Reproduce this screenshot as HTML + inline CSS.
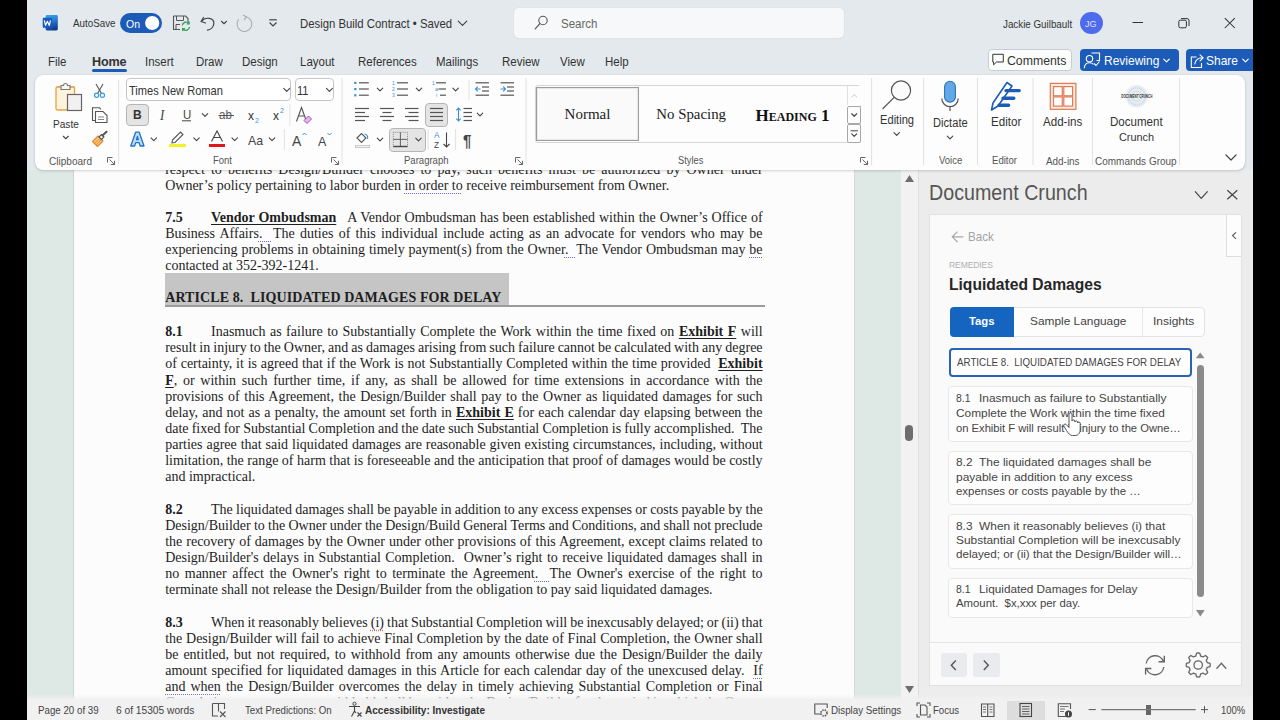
<!DOCTYPE html><html><head><meta charset="utf-8"><style>
html,body{margin:0;padding:0;width:1280px;height:720px;overflow:hidden;background:#e3e9ec;}
.a{position:absolute;}
.t{position:absolute;white-space:pre;line-height:1;}
svg{overflow:visible;}
.ln{position:absolute;white-space:nowrap;line-height:1;font-family:'Liberation Serif',serif;font-size:14px;color:#1e1e1e;text-align:justify;text-align-last:justify;}
.ln.last{text-align:left;text-align-last:left;}
.bu{font-weight:bold;text-decoration:underline;text-underline-offset:2px;text-decoration-thickness:1px;}
.sq{text-decoration:underline dotted #6b6bd6;text-underline-offset:3px;text-decoration-thickness:1px;}
</style></head><body>
<div class="a" style="left:27.00px;top:170.00px;width:874.00px;height:529.00px;background:#dee8e5;"></div>
<div class="a" style="left:73.00px;top:170.00px;width:781.50px;height:529.00px;background:#fcfcfc;border-left:1px solid #cfd5d4;border-right:1px solid #d5dbda;box-sizing:border-box;"></div>
<div class="a" style="left:901.00px;top:170.00px;width:16.50px;height:529.00px;background:#f2f2f2;"></div>
<div class="a" style="left:917.50px;top:170.00px;width:1.00px;height:529.00px;background:#dedede;"></div>
<div class="a" style="left:918.50px;top:170.00px;width:334.50px;height:529.00px;background:#ececec;"></div>
<div class="ln" style="left:165.20px;top:162.88px;width:597.40px;">respect to benefits Design/Builder chooses to pay, such benefits must be authorized by Owner under</div>
<div class="ln last" style="left:165.20px;top:178.98px;width:597.40px;">Owner’s policy pertaining to labor burden <span class="sq">in order to</span> receive reimbursement from Owner.</div>
<div class="ln last" style="left:165.20px;top:210.58px;font-weight:bold;">7.5</div>
<div class="ln" style="left:211.00px;top:210.58px;width:551.60px;"><span class="bu">Vendor Ombudsman</span>&nbsp;&nbsp; A Vendor Ombudsman has been established within the Owner’s Office of</div>
<div class="ln" style="left:165.20px;top:226.70px;width:597.40px;">Business Affairs<span class="sq">.&nbsp;&nbsp;</span>The duties of this individual include acting as an advocate for vendors who may be</div>
<div class="ln" style="left:165.20px;top:242.82px;width:597.40px;">experiencing problems in obtaining timely payment(s) from the Owner<span class="sq">.&nbsp;&nbsp;</span>The Vendor Ombudsman may <span class="sq">be</span></div>
<div class="ln last" style="left:165.20px;top:258.94px;width:597.40px;"><span class="sq">contacted</span> at 352-392-1241.</div>
<div class="a" style="left:165.00px;top:273.30px;width:344.00px;height:32.30px;background:#c5c5c5;"></div>
<div class="ln last" style="left:165.20px;top:290.78px;font-weight:bold;letter-spacing:0.085px;">ARTICLE 8<span class="sq">.&nbsp;&nbsp;</span>LIQUIDATED DAMAGES FOR DELAY</div>
<div class="a" style="left:165.00px;top:305.00px;width:599.60px;height:2.00px;background:#9c9c9c;"></div>
<div class="ln last" style="left:165.20px;top:325.08px;font-weight:bold;">8.1</div>
<div class="ln" style="left:211.00px;top:325.08px;width:551.60px;">Inasmuch as failure to Substantially Complete the Work within the time fixed on <span class="bu">Exhibit F</span> will</div>
<div class="ln" style="left:165.20px;top:341.22px;width:597.40px;word-spacing:-0.468px;">result in injury to the Owner, and as damages arising from such failure cannot be calculated with any degree</div>
<div class="ln" style="left:165.20px;top:357.36px;width:597.40px;">of certainty, it is agreed that if the Work is not Substantially Completed within the time provided &nbsp;<span class="bu">Exhibit</span></div>
<div class="ln" style="left:165.20px;top:373.50px;width:597.40px;"><span class="bu">F</span>, or within such further time, if any, as shall be allowed for time extensions in accordance with the</div>
<div class="ln" style="left:165.20px;top:389.64px;width:597.40px;">provisions of this Agreement, the Design/Builder shall pay to the Owner as liquidated damages for such</div>
<div class="ln" style="left:165.20px;top:405.78px;width:597.40px;">delay, and not as a penalty, the amount set forth in <span class="bu">Exhibit E</span> for each calendar day elapsing between the</div>
<div class="ln" style="left:165.20px;top:421.92px;width:597.40px;word-spacing:-0.319px;">date fixed for Substantial Completion and the date such Substantial Completion is fully accomplished. &nbsp;The</div>
<div class="ln" style="left:165.20px;top:438.06px;width:597.40px;">parties agree that said liquidated damages are reasonable given existing circumstances, including, without</div>
<div class="ln" style="left:165.20px;top:454.20px;width:597.40px;">limitation, the range of harm that is foreseeable and the anticipation that proof of damages would be costly</div>
<div class="ln last" style="left:165.20px;top:470.34px;width:597.40px;">and impractical.</div>
<div class="ln last" style="left:165.20px;top:502.58px;font-weight:bold;">8.2</div>
<div class="ln" style="left:211.00px;top:502.58px;width:551.60px;word-spacing:-0.242px;">The liquidated damages shall be payable in addition to any excess expenses or costs payable by the</div>
<div class="ln" style="left:165.20px;top:518.74px;width:597.40px;word-spacing:-0.281px;">Design/Builder to the Owner under the Design/Build General Terms and Conditions, and shall not preclude</div>
<div class="ln" style="left:165.20px;top:534.90px;width:597.40px;">the recovery of damages by the Owner under other provisions of this Agreement, except claims related to</div>
<div class="ln" style="left:165.20px;top:551.06px;width:597.40px;">Design/Builder's delays in Substantial Completion. &nbsp;Owner’s right to receive liquidated damages shall in</div>
<div class="ln" style="left:165.20px;top:567.22px;width:597.40px;">no manner affect the Owner's right to terminate the Agreement<span class="sq">.&nbsp;&nbsp;</span>The Owner's exercise of the right to</div>
<div class="ln last" style="left:165.20px;top:583.38px;width:597.40px;">terminate shall not release the Design/Builder from the obligation to pay said liquidated damages.</div>
<div class="ln last" style="left:165.20px;top:615.58px;font-weight:bold;">8.3</div>
<div class="ln" style="left:211.00px;top:615.58px;width:551.60px;word-spacing:-0.501px;">When it reasonably believes <span style="text-decoration:underline dotted #d07070;text-underline-offset:3px">(i)</span> that Substantial Completion will be inexcusably delayed; or (ii) that</div>
<div class="ln" style="left:165.20px;top:631.68px;width:597.40px;">the Design/Builder will fail to achieve Final Completion by the date of Final Completion, the Owner shall</div>
<div class="ln" style="left:165.20px;top:647.78px;width:597.40px;">be entitled, but not required, to withhold from any amounts otherwise due the Design/Builder the daily</div>
<div class="ln" style="left:165.20px;top:663.88px;width:597.40px;">amount specified for liquidated damages in this Article for each calendar day of the unexcused delay. &nbsp;<span class="sq">If</span></div>
<div class="ln" style="left:165.20px;top:679.98px;width:597.40px;"><span class="sq">and when</span> the Design/Builder overcomes the delay in timely achieving Substantial Completion or Final</div>
<div class="ln" style="left:165.20px;top:696.08px;width:597.40px;word-spacing:-0.466px;">Completion, any amounts so withheld shall be paid to the Design/Builder for the period in which the Owner</div>
<div class="a" style="left:905.40px;top:424.60px;width:7.60px;height:16.20px;background:#6e6e6e;border-radius:4px;"></div>
<div class="a" style="left:27.00px;top:0.00px;width:1226.00px;height:170.00px;background:#e3e9ec;"></div>
<div class="t" style="left:72.70px;top:17.96px;font-size:10.58px;color:#333;font-weight:normal;font-family:'Liberation Sans', sans-serif;transform:scaleX(0.9259);transform-origin:0 0;">AutoSave</div>
<div class="a" style="left:120.40px;top:13.40px;width:41.60px;height:19.20px;background:#1d5bb8;border-radius:10px;"></div>
<div class="t" style="left:125.80px;top:18.57px;font-size:11.34px;color:#fff;font-weight:normal;font-family:'Liberation Sans', sans-serif;transform:scaleX(0.9259);transform-origin:0 0;">On</div>
<div class="t" style="left:300.30px;top:18.31px;font-size:12.26px;color:#333;font-weight:normal;font-family:'Liberation Sans', sans-serif;transform:scaleX(0.9259);transform-origin:0 0;">Design Build Contract • Saved</div>
<div class="a" style="left:513.50px;top:8.00px;width:330.20px;height:30.00px;background:#f6f8f9;border-radius:5px;box-shadow:0 0 0 1px #dfe4e7, 0 1px 1px #d2d7da;"></div>
<div class="t" style="left:561.00px;top:18.23px;font-size:12.42px;color:#666;font-weight:normal;font-family:'Liberation Sans', sans-serif;transform:scaleX(0.9259);transform-origin:0 0;">Search</div>
<div class="t" style="left:1002.50px;top:18.56px;font-size:10.58px;color:#333;font-weight:normal;font-family:'Liberation Sans', sans-serif;transform:scaleX(0.9259);transform-origin:0 0;">Jackie Guilbault</div>
<div class="a" style="left:1080.30px;top:11.50px;width:22.80px;height:22.80px;background:#4f6bed;border-radius:50%;"></div>
<div class="t" style="left:1084.60px;top:18.99px;font-size:9.72px;color:#dfe5ff;font-weight:normal;font-family:'Liberation Sans', sans-serif;transform:scaleX(0.9259);transform-origin:0 0;">JG</div>
<div class="t" style="left:47.90px;top:55.83px;font-size:12.42px;color:#333;font-weight:normal;font-family:'Liberation Sans', sans-serif;transform:scaleX(0.9259);transform-origin:0 0;">File</div>
<div class="t" style="left:91.50px;top:55.23px;font-size:13.61px;color:#333;font-weight:bold;font-family:'Liberation Sans', sans-serif;transform:scaleX(0.9259);transform-origin:0 0;letter-spacing:-0.15px;">Home</div>
<div class="t" style="left:145.40px;top:55.83px;font-size:12.42px;color:#333;font-weight:normal;font-family:'Liberation Sans', sans-serif;transform:scaleX(0.9259);transform-origin:0 0;">Insert</div>
<div class="t" style="left:195.50px;top:55.83px;font-size:12.42px;color:#333;font-weight:normal;font-family:'Liberation Sans', sans-serif;transform:scaleX(0.9259);transform-origin:0 0;">Draw</div>
<div class="t" style="left:242.30px;top:55.83px;font-size:12.42px;color:#333;font-weight:normal;font-family:'Liberation Sans', sans-serif;transform:scaleX(0.9259);transform-origin:0 0;">Design</div>
<div class="t" style="left:300.00px;top:55.83px;font-size:12.42px;color:#333;font-weight:normal;font-family:'Liberation Sans', sans-serif;transform:scaleX(0.9259);transform-origin:0 0;">Layout</div>
<div class="t" style="left:357.80px;top:55.83px;font-size:12.42px;color:#333;font-weight:normal;font-family:'Liberation Sans', sans-serif;transform:scaleX(0.9259);transform-origin:0 0;">References</div>
<div class="t" style="left:436.40px;top:55.83px;font-size:12.42px;color:#333;font-weight:normal;font-family:'Liberation Sans', sans-serif;transform:scaleX(0.9259);transform-origin:0 0;">Mailings</div>
<div class="t" style="left:502.20px;top:55.83px;font-size:12.42px;color:#333;font-weight:normal;font-family:'Liberation Sans', sans-serif;transform:scaleX(0.9259);transform-origin:0 0;">Review</div>
<div class="t" style="left:559.60px;top:55.83px;font-size:12.42px;color:#333;font-weight:normal;font-family:'Liberation Sans', sans-serif;transform:scaleX(0.9259);transform-origin:0 0;">View</div>
<div class="t" style="left:604.90px;top:55.83px;font-size:12.42px;color:#333;font-weight:normal;font-family:'Liberation Sans', sans-serif;transform:scaleX(0.9259);transform-origin:0 0;">Help</div>
<div class="a" style="left:91.50px;top:69.00px;width:35.00px;height:2.60px;background:#1d5bb8;border-radius:2px;"></div>
<div class="a" style="left:987.70px;top:48.60px;width:84.80px;height:22.90px;background:#fbfcfc;border:1px solid #c9cdd0;border-radius:4px;box-sizing:border-box;"></div>
<div class="t" style="left:1007.30px;top:54.19px;font-size:13.28px;color:#333;font-weight:normal;font-family:'Liberation Sans', sans-serif;transform:scaleX(0.9259);transform-origin:0 0;">Comments</div>
<div class="a" style="left:1080.20px;top:48.60px;width:98.40px;height:22.90px;background:#1d5bb8;border-radius:4px;"></div>
<div class="t" style="left:1103.60px;top:54.56px;font-size:12.96px;color:#fff;font-weight:normal;font-family:'Liberation Sans', sans-serif;transform:scaleX(0.9259);transform-origin:0 0;">Reviewing</div>
<div class="a" style="left:1186.00px;top:48.60px;width:70.00px;height:22.90px;background:#1d5bb8;border-radius:4px;"></div>
<div class="t" style="left:1206.40px;top:54.56px;font-size:12.96px;color:#fff;font-weight:normal;font-family:'Liberation Sans', sans-serif;transform:scaleX(0.9259);transform-origin:0 0;">Share</div>
<div class="a" style="left:35.00px;top:75.00px;width:1209.50px;height:95.00px;background:#fdfdfd;border-radius:8px;box-shadow:0 1px 3px rgba(0,0,0,0.16), 0 0 1px rgba(0,0,0,0.12);"></div>
<div class="t" style="left:49.00px;top:155.62px;font-size:10.85px;color:#555;font-weight:normal;font-family:'Liberation Sans', sans-serif;transform:scaleX(0.9259);transform-origin:0 0;">Clipboard</div>
<div class="t" style="left:213.10px;top:155.92px;font-size:10.26px;color:#555;font-weight:normal;font-family:'Liberation Sans', sans-serif;transform:scaleX(0.9259);transform-origin:0 0;">Font</div>
<div class="t" style="left:404.00px;top:155.89px;font-size:10.31px;color:#555;font-weight:normal;font-family:'Liberation Sans', sans-serif;transform:scaleX(0.9259);transform-origin:0 0;">Paragraph</div>
<div class="t" style="left:678.00px;top:156.03px;font-size:10.04px;color:#555;font-weight:normal;font-family:'Liberation Sans', sans-serif;transform:scaleX(0.9259);transform-origin:0 0;">Styles</div>
<div class="t" style="left:938.75px;top:156.12px;font-size:10.26px;color:#555;font-weight:normal;font-family:'Liberation Sans', sans-serif;transform:scaleX(0.9259);transform-origin:0 0;">Voice</div>
<div class="t" style="left:992.30px;top:156.06px;font-size:10.37px;color:#555;font-weight:normal;font-family:'Liberation Sans', sans-serif;transform:scaleX(0.9259);transform-origin:0 0;">Editor</div>
<div class="t" style="left:1045.70px;top:155.90px;font-size:10.69px;color:#555;font-weight:normal;font-family:'Liberation Sans', sans-serif;transform:scaleX(0.9259);transform-origin:0 0;">Add-ins</div>
<div class="t" style="left:1095.00px;top:155.85px;font-size:10.80px;color:#555;font-weight:normal;font-family:'Liberation Sans', sans-serif;transform:scaleX(0.9259);transform-origin:0 0;">Commands Group</div>
<div class="t" style="left:53.40px;top:118.79px;font-size:10.91px;color:#333;font-weight:normal;font-family:'Liberation Sans', sans-serif;transform:scaleX(0.9259);transform-origin:0 0;">Paste</div>
<div class="a" style="left:126.40px;top:78.40px;width:165.00px;height:22.40px;background:#fff;border:1px solid #c6c6c6;border-radius:4px;box-sizing:border-box;"></div>
<div class="t" style="left:128.60px;top:85.25px;font-size:11.99px;color:#333;font-weight:normal;font-family:'Liberation Sans', sans-serif;transform:scaleX(0.9259);transform-origin:0 0;">Times New Roman</div>
<div class="a" style="left:294.50px;top:78.40px;width:39.90px;height:22.40px;background:#fff;border:1px solid #c6c6c6;border-radius:4px;box-sizing:border-box;"></div>
<div class="t" style="left:297.00px;top:85.25px;font-size:11.99px;color:#333;font-weight:normal;font-family:'Liberation Sans', sans-serif;transform:scaleX(0.9259);transform-origin:0 0;">11</div>
<div class="a" style="left:126.40px;top:104.00px;width:22.60px;height:22.20px;background:#e4e4e4;border:1px solid #b5b5b5;border-radius:4px;box-sizing:border-box;"></div>
<div class="t" style="left:133.30px;top:108.86px;font-size:12.96px;color:#333;font-weight:bold;font-family:'Liberation Sans', sans-serif;transform:scaleX(0.9259);transform-origin:0 0;">B</div>
<div class="t" style="left:159.50px;top:108.31px;font-size:14.04px;color:#444;font-weight:normal;font-family:'Liberation Sans', sans-serif;transform:scaleX(0.9259);transform-origin:0 0;font-style:italic;font-family:'Liberation Serif',serif;">I</div>
<div class="t" style="left:182.50px;top:108.63px;font-size:12.42px;color:#444;font-weight:normal;font-family:'Liberation Sans', sans-serif;transform:scaleX(0.9259);transform-origin:0 0;">U</div>
<div class="t" style="left:219.00px;top:109.43px;font-size:12.42px;color:#555;font-weight:normal;font-family:'Liberation Sans', sans-serif;transform:scaleX(0.9259);transform-origin:0 0;">ab</div>
<div class="t" style="left:247.70px;top:109.86px;font-size:12.96px;color:#333;font-weight:normal;font-family:'Liberation Sans', sans-serif;transform:scaleX(0.9259);transform-origin:0 0;">x</div>
<div class="t" style="left:254.50px;top:117.08px;font-size:7.56px;color:#3b8fd9;font-weight:normal;font-family:'Liberation Sans', sans-serif;transform:scaleX(0.9259);transform-origin:0 0;">2</div>
<div class="t" style="left:272.70px;top:109.86px;font-size:12.96px;color:#333;font-weight:normal;font-family:'Liberation Sans', sans-serif;transform:scaleX(0.9259);transform-origin:0 0;">x</div>
<div class="t" style="left:279.50px;top:107.08px;font-size:7.56px;color:#3b8fd9;font-weight:normal;font-family:'Liberation Sans', sans-serif;transform:scaleX(0.9259);transform-origin:0 0;">2</div>
<div class="a" style="left:169.00px;top:143.60px;width:17.00px;height:3.50px;background:#f2f22a;"></div>
<div class="a" style="left:209.00px;top:143.80px;width:15.70px;height:3.40px;background:#e0161b;"></div>
<div class="t" style="left:248.40px;top:133.69px;font-size:13.28px;color:#444;font-weight:normal;font-family:'Liberation Sans', sans-serif;transform:scaleX(0.9259);transform-origin:0 0;">Aa</div>
<div class="t" style="left:292.00px;top:133.26px;font-size:15.12px;color:#444;font-weight:normal;font-family:'Liberation Sans', sans-serif;transform:scaleX(0.9259);transform-origin:0 0;">A</div>
<div class="t" style="left:318.00px;top:134.58px;font-size:13.50px;color:#444;font-weight:normal;font-family:'Liberation Sans', sans-serif;transform:scaleX(0.9259);transform-origin:0 0;">A</div>
<div class="t" style="left:392.20px;top:80.97px;font-size:5.40px;color:#3b8fd9;font-weight:normal;font-family:'Liberation Sans', sans-serif;transform:scaleX(0.9259);transform-origin:0 0;">1</div>
<div class="t" style="left:392.20px;top:87.17px;font-size:5.40px;color:#3b8fd9;font-weight:normal;font-family:'Liberation Sans', sans-serif;transform:scaleX(0.9259);transform-origin:0 0;">2</div>
<div class="t" style="left:392.20px;top:93.37px;font-size:5.40px;color:#3b8fd9;font-weight:normal;font-family:'Liberation Sans', sans-serif;transform:scaleX(0.9259);transform-origin:0 0;">3</div>
<div class="t" style="left:432.00px;top:80.77px;font-size:5.40px;color:#3b8fd9;font-weight:normal;font-family:'Liberation Sans', sans-serif;transform:scaleX(0.9259);transform-origin:0 0;">1</div>
<div class="t" style="left:434.50px;top:86.90px;font-size:5.94px;color:#3b8fd9;font-weight:normal;font-family:'Liberation Sans', sans-serif;transform:scaleX(0.9259);transform-origin:0 0;">a</div>
<div class="t" style="left:436.00px;top:93.37px;font-size:5.40px;color:#3b8fd9;font-weight:normal;font-family:'Liberation Sans', sans-serif;transform:scaleX(0.9259);transform-origin:0 0;">i</div>
<div class="a" style="left:425.00px;top:103.20px;width:23.00px;height:23.40px;background:#e4e4e4;border:1px solid #b5b5b5;border-radius:4px;box-sizing:border-box;"></div>
<div class="a" style="left:354.50px;top:144.50px;width:15.00px;height:3.00px;background:#f4f4f4;border:1px solid #c9c9c9;box-sizing:border-box;"></div>
<div class="a" style="left:389.00px;top:128.20px;width:37.00px;height:23.40px;background:#e4e4e4;border:1px solid #b5b5b5;border-radius:4px;box-sizing:border-box;"></div>
<div class="t" style="left:434.00px;top:130.73px;font-size:8.86px;color:#3b8fd9;font-weight:normal;font-family:'Liberation Sans', sans-serif;transform:scaleX(0.9259);transform-origin:0 0;">A</div>
<div class="t" style="left:434.00px;top:140.73px;font-size:8.86px;color:#444;font-weight:normal;font-family:'Liberation Sans', sans-serif;transform:scaleX(0.9259);transform-origin:0 0;">Z</div>
<div class="t" style="left:463.30px;top:132.52px;font-size:16.20px;color:#444;font-weight:bold;font-family:'Liberation Sans', sans-serif;transform:scaleX(0.9259);transform-origin:0 0;">¶</div>
<div class="a" style="left:535.40px;top:85.40px;width:325.90px;height:58.00px;background:#fdfdfd;border:1px solid #d6d6d6;border-radius:3px;box-sizing:border-box;"></div>
<div class="a" style="left:536.20px;top:86.60px;width:103.10px;height:54.00px;background:#fafafa;border:1px solid #9d9d9d;box-shadow:inset 0 0 0 1px #e8e8e8;box-sizing:border-box;"></div>
<div class="t" style="left:564.60px;top:107.10px;font-size:15.00px;color:#222;font-weight:normal;font-family:'Liberation Serif', serif;">Normal</div>
<div class="t" style="left:656.30px;top:107.17px;font-size:14.85px;color:#222;font-weight:normal;font-family:'Liberation Serif', serif;">No Spacing</div>
<div class="t" style="left:755.50px;top:106.50px;font-size:17.00px;color:#111;font-weight:bold;font-family:'Liberation Serif', serif;font-variant:small-caps;">Heading 1</div>
<div class="a" style="left:847.00px;top:86.00px;width:14.30px;height:19.00px;background:#fdfdfd;border-left:1px solid #e0e0e0;box-sizing:border-box;"></div>
<div class="a" style="left:847.00px;top:105.80px;width:14.30px;height:18.20px;background:#fdfdfd;border:1px solid #a8a8a8;border-radius:2px;box-sizing:border-box;"></div>
<div class="a" style="left:847.00px;top:124.00px;width:14.30px;height:19.40px;background:#fdfdfd;border:1px solid #a8a8a8;border-radius:2px;box-sizing:border-box;"></div>
<div class="t" style="left:880.20px;top:114.32px;font-size:12.04px;color:#333;font-weight:normal;font-family:'Liberation Sans', sans-serif;transform:scaleX(0.9259);transform-origin:0 0;">Editing</div>
<div class="t" style="left:933.40px;top:116.72px;font-size:12.04px;color:#333;font-weight:normal;font-family:'Liberation Sans', sans-serif;transform:scaleX(0.9259);transform-origin:0 0;">Dictate</div>
<div class="t" style="left:990.80px;top:115.77px;font-size:12.53px;color:#333;font-weight:normal;font-family:'Liberation Sans', sans-serif;transform:scaleX(0.9259);transform-origin:0 0;">Editor</div>
<div class="t" style="left:1043.00px;top:115.57px;font-size:12.53px;color:#333;font-weight:normal;font-family:'Liberation Sans', sans-serif;transform:scaleX(0.9259);transform-origin:0 0;">Add-ins</div>
<div class="t" style="left:1110.00px;top:115.80px;font-size:12.48px;color:#333;font-weight:normal;font-family:'Liberation Sans', sans-serif;transform:scaleX(0.9259);transform-origin:0 0;">Document</div>
<div class="t" style="left:1118.75px;top:131.16px;font-size:11.77px;color:#333;font-weight:normal;font-family:'Liberation Sans', sans-serif;transform:scaleX(0.9259);transform-origin:0 0;">Crunch</div>
<div class="t" style="left:929.00px;top:182.74px;font-size:21.50px;color:#555;font-weight:normal;font-family:'Liberation Sans', sans-serif;transform:scaleX(0.9153);transform-origin:0 0;">Document Crunch</div>
<div class="a" style="left:928.60px;top:213.50px;width:313.10px;height:472.90px;background:#fafafa;border:1px solid #e2e2e2;box-sizing:border-box;"></div>
<div class="a" style="left:1226.00px;top:213.50px;width:15.70px;height:43.50px;background:#fdfdfd;border-left:1px solid #dedede;border-bottom:1px solid #dedede;border-top:1px solid #e2e2e2;border-right:1px solid #e2e2e2;box-sizing:border-box;"></div>
<div class="t" style="left:967.70px;top:231.17px;font-size:12.53px;color:#a3a3a3;font-weight:normal;font-family:'Liberation Sans', sans-serif;transform:scaleX(0.9259);transform-origin:0 0;">Back</div>
<div class="t" style="left:948.60px;top:261.01px;font-size:9.29px;color:#b0b0b0;font-weight:normal;font-family:'Liberation Sans', sans-serif;transform:scaleX(0.9259);transform-origin:0 0;letter-spacing:-0.15px;">REMEDIES</div>
<div class="t" style="left:948.60px;top:277.22px;font-size:15.80px;color:#262626;font-weight:bold;font-family:'Liberation Sans', sans-serif;transform:scaleX(0.9882);transform-origin:0 0;">Liquidated Damages</div>
<div class="a" style="left:949.70px;top:307.30px;width:255.50px;height:30.20px;background:#fdfdfd;border:1px solid #e3e3e3;border-radius:4px;box-sizing:border-box;"></div>
<div class="a" style="left:949.70px;top:307.30px;width:64.10px;height:30.20px;background:#1565c0;border-radius:4px 0 0 4px;"></div>
<div class="a" style="left:1141.70px;top:308.00px;width:1.00px;height:29.00px;background:#e6e6e6;"></div>
<div class="t" style="left:969.00px;top:315.44px;font-size:11.60px;color:#fff;font-weight:bold;font-family:'Liberation Sans', sans-serif;transform:scaleX(0.9728);transform-origin:0 0;">Tags</div>
<div class="t" style="left:1029.50px;top:315.44px;font-size:11.60px;color:#444;font-weight:normal;font-family:'Liberation Sans', sans-serif;transform:scaleX(1.0248);transform-origin:0 0;">Sample Language</div>
<div class="t" style="left:1153.00px;top:315.44px;font-size:11.60px;color:#444;font-weight:normal;font-family:'Liberation Sans', sans-serif;transform:scaleX(1.0331);transform-origin:0 0;">Insights</div>
<div class="a" style="left:948.60px;top:348.40px;width:243.40px;height:29.10px;background:#fff;border:2px solid #2a62b8;border-radius:4px;box-sizing:border-box;"></div>
<div class="t" style="left:957.30px;top:357.35px;font-size:10.60px;color:#444;font-weight:normal;font-family:'Liberation Sans', sans-serif;transform:scaleX(0.9220);transform-origin:0 0;">ARTICLE 8.&nbsp;&nbsp;LIQUIDATED DAMAGES FOR DELAY</div>
<div class="a" style="left:1196.50px;top:364.80px;width:7.50px;height:232.10px;background:#8a8a8a;border-radius:4px;"></div>
<div class="a" style="left:948.30px;top:386.40px;width:244.40px;height:55.30px;background:#fdfdfd;border:1px solid #e8e8e8;border-radius:4px;box-sizing:border-box;"></div>
<div class="t" style="left:956.40px;top:393.34px;font-size:11.20px;color:#444;font-weight:normal;font-family:'Liberation Sans', sans-serif;transform:scaleX(0.9313);transform-origin:0 0;">8.1</div>
<div class="t" style="left:979.40px;top:393.34px;font-size:11.20px;color:#444;font-weight:normal;font-family:'Liberation Sans', sans-serif;transform:scaleX(1.0648);transform-origin:0 0;">Inasmuch as failure to Substantially</div>
<div class="t" style="left:956.40px;top:408.34px;font-size:11.20px;color:#444;font-weight:normal;font-family:'Liberation Sans', sans-serif;transform:scaleX(1.0608);transform-origin:0 0;">Complete the Work within the time fixed</div>
<div class="t" style="left:956.40px;top:422.54px;font-size:11.20px;color:#444;font-weight:normal;font-family:'Liberation Sans', sans-serif;transform:scaleX(1.0008);transform-origin:0 0;">on Exhibit F will result in injury to the Owne…</div>
<div class="a" style="left:948.30px;top:450.50px;width:244.40px;height:54.70px;background:#fdfdfd;border:1px solid #e8e8e8;border-radius:4px;box-sizing:border-box;"></div>
<div class="t" style="left:956.40px;top:457.34px;font-size:11.20px;color:#444;font-weight:normal;font-family:'Liberation Sans', sans-serif;transform:scaleX(1.0597);transform-origin:0 0;">8.2</div>
<div class="t" style="left:979.40px;top:457.34px;font-size:11.20px;color:#444;font-weight:normal;font-family:'Liberation Sans', sans-serif;transform:scaleX(1.0703);transform-origin:0 0;">The liquidated damages shall be</div>
<div class="t" style="left:956.40px;top:471.54px;font-size:11.20px;color:#444;font-weight:normal;font-family:'Liberation Sans', sans-serif;transform:scaleX(1.0703);transform-origin:0 0;">payable in addition to any excess</div>
<div class="t" style="left:956.40px;top:485.94px;font-size:11.20px;color:#444;font-weight:normal;font-family:'Liberation Sans', sans-serif;transform:scaleX(1.0241);transform-origin:0 0;">expenses or costs payable by the …</div>
<div class="a" style="left:948.30px;top:513.75px;width:244.40px;height:55.15px;background:#fdfdfd;border:1px solid #e8e8e8;border-radius:4px;box-sizing:border-box;"></div>
<div class="t" style="left:956.40px;top:520.54px;font-size:11.20px;color:#444;font-weight:normal;font-family:'Liberation Sans', sans-serif;transform:scaleX(1.0597);transform-origin:0 0;">8.3</div>
<div class="t" style="left:979.40px;top:520.54px;font-size:11.20px;color:#444;font-weight:normal;font-family:'Liberation Sans', sans-serif;transform:scaleX(1.0656);transform-origin:0 0;">When it reasonably believes (i) that</div>
<div class="t" style="left:956.40px;top:535.04px;font-size:11.20px;color:#444;font-weight:normal;font-family:'Liberation Sans', sans-serif;transform:scaleX(1.0642);transform-origin:0 0;">Substantial Completion will be inexcusably</div>
<div class="t" style="left:956.40px;top:549.24px;font-size:11.20px;color:#444;font-weight:normal;font-family:'Liberation Sans', sans-serif;transform:scaleX(1.0402);transform-origin:0 0;">delayed; or (ii) that the Design/Builder will…</div>
<div class="a" style="left:948.30px;top:577.60px;width:244.40px;height:40.70px;background:#fdfdfd;border:1px solid #e8e8e8;border-radius:4px;box-sizing:border-box;"></div>
<div class="t" style="left:956.40px;top:584.24px;font-size:11.20px;color:#444;font-weight:normal;font-family:'Liberation Sans', sans-serif;transform:scaleX(0.9313);transform-origin:0 0;">8.1</div>
<div class="t" style="left:979.40px;top:584.24px;font-size:11.20px;color:#444;font-weight:normal;font-family:'Liberation Sans', sans-serif;transform:scaleX(1.0526);transform-origin:0 0;">Liquidated Damages for Delay</div>
<div class="t" style="left:956.40px;top:598.34px;font-size:11.20px;color:#444;font-weight:normal;font-family:'Liberation Sans', sans-serif;transform:scaleX(1.0153);transform-origin:0 0;">Amount.&nbsp;&nbsp;$x,xxx per day.</div>
<div class="a" style="left:929.60px;top:642.20px;width:311.10px;height:1.00px;background:#e4e4e4;"></div>
<div class="a" style="left:940.70px;top:653.20px;width:26.60px;height:23.90px;background:#e9ebee;border-radius:3px;"></div>
<div class="a" style="left:973.00px;top:653.20px;width:26.70px;height:23.90px;background:#e9ebee;border-radius:3px;"></div>
<div class="a" style="left:27.00px;top:694.00px;width:1226.00px;height:5.00px;background:linear-gradient(rgba(241,241,241,0),rgba(241,241,241,0.85));"></div>
<div class="a" style="left:27.00px;top:699.00px;width:1226.00px;height:21.00px;background:#f1f1f1;"></div>
<div class="t" style="left:38.25px;top:705.48px;font-size:10.53px;color:#444;font-weight:normal;font-family:'Liberation Sans', sans-serif;transform:scaleX(0.9259);transform-origin:0 0;">Page 20 of 39</div>
<div class="t" style="left:115.90px;top:705.24px;font-size:11.02px;color:#444;font-weight:normal;font-family:'Liberation Sans', sans-serif;transform:scaleX(0.9259);transform-origin:0 0;">6 of 15305 words</div>
<div class="t" style="left:245.20px;top:705.51px;font-size:10.48px;color:#444;font-weight:normal;font-family:'Liberation Sans', sans-serif;transform:scaleX(0.9259);transform-origin:0 0;">Text Predictions: On</div>
<div class="t" style="left:364.50px;top:705.32px;font-size:10.85px;color:#333;font-weight:bold;font-family:'Liberation Sans', sans-serif;transform:scaleX(0.9259);transform-origin:0 0;">Accessibility: Investigate</div>
<div class="t" style="left:831.00px;top:705.46px;font-size:10.58px;color:#444;font-weight:normal;font-family:'Liberation Sans', sans-serif;transform:scaleX(0.9259);transform-origin:0 0;">Display Settings</div>
<div class="t" style="left:933.00px;top:705.56px;font-size:10.37px;color:#444;font-weight:normal;font-family:'Liberation Sans', sans-serif;transform:scaleX(0.9259);transform-origin:0 0;">Focus</div>
<div class="a" style="left:1007.40px;top:700.50px;width:37.60px;height:19.50px;background:#dddddd;"></div>
<div class="a" style="left:1145.80px;top:704.50px;width:5.20px;height:10.50px;background:#666;"></div>
<div class="t" style="left:1221.00px;top:705.62px;font-size:10.26px;color:#444;font-weight:normal;font-family:'Liberation Sans', sans-serif;transform:scaleX(0.9259);transform-origin:0 0;">100%</div>
<div class="a" style="left:0.00px;top:0.00px;width:27.00px;height:720.00px;background:#000;"></div>
<div class="a" style="left:1253.00px;top:0.00px;width:27.00px;height:720.00px;background:#000;"></div>
<svg class="a" style="left:0;top:0" width="1280" height="720"><path d="M905,182 L909.5,175 L914,182 Z" fill="#6e6e6e"/><path d="M905,686 L909.5,693 L914,686 Z" fill="#6e6e6e"/><defs><linearGradient id="wg" x1="0" y1="0" x2="0.3" y2="1"><stop offset="0" stop-color="#41a5ee"/><stop offset="0.5" stop-color="#2b7cd3"/><stop offset="1" stop-color="#103f91"/></linearGradient></defs><rect x="45.6" y="15" width="12.2" height="15.5" rx="1.4" fill="url(#wg)"/><rect x="42.7" y="17.8" width="9.4" height="9.9" rx="1" fill="#185abd"/><path d="M44.3,20.3 L45.5,25.4 L47.4,21.3 L49.3,25.4 L50.5,20.3" fill="none" stroke="#fff" stroke-width="1.15" stroke-linejoin="round"/><circle cx="152.2" cy="23" r="7.1" fill="#fff"/><path d="M173.5,16 H185.5 L188,18.5 V24 M173.5,16 V29.5 H180" fill="none" stroke="#555" stroke-width="1.1"/><path d="M176.5,16 V20.5 H183.5 V16" fill="none" stroke="#555" stroke-width="1"/><path d="M176,29.5 V24.5 H180" fill="none" stroke="#555" stroke-width="1"/><path d="M182.3,25.5 A3.8,3.8 0 0 1 189,23.5 M189.5,27 A3.8,3.8 0 0 1 182.8,29" fill="none" stroke="#3aa35a" stroke-width="1.4"/><path d="M189.2,21.6 V24 H186.8 M182.6,31 V28.6 H185" fill="none" stroke="#3aa35a" stroke-width="1.2"/><path d="M203.5,17.5 L201,21.5 L205.5,23" fill="none" stroke="#444" stroke-width="1.2" stroke-linejoin="round" stroke-linecap="round"/><path d="M201.5,21.3 C205,16.5 214.5,17.5 213.8,24 C213.3,27.5 210.5,29.5 207.5,30.2" fill="none" stroke="#444" stroke-width="1.2" stroke-linecap="round"/><path d="M221.5,21.25 L224,23.75 L226.5,21.25" fill="none" stroke="#444" stroke-width="1.1" stroke-linecap="round" stroke-linejoin="round"/><path d="M246,16.8 A7.4,7.4 0 1 1 238.5,19.5" fill="none" stroke="#a9aeb2" stroke-width="1.1" stroke-linecap="round"/><path d="M243.5,15.2 L246.3,16.9 L244.3,19.6" fill="none" stroke="#a9aeb2" stroke-width="1.1" stroke-linecap="round"/><path d="M269.3,19.8 H276.8" stroke="#444" stroke-width="1.2"/><path d="M269.6,22.5 L273,26 L276.5,22.5" fill="none" stroke="#444" stroke-width="1.2"/><path d="M458.25,21.175 L462.5,25.425 L466.75,21.175" fill="none" stroke="#444" stroke-width="1.2" stroke-linecap="round" stroke-linejoin="round"/><circle cx="543" cy="20.5" r="4.2" fill="none" stroke="#555" stroke-width="1.1"/><path d="M539.9,23.6 L535.2,28.8" stroke="#555" stroke-width="1.2" stroke-linecap="round"/><path d="M1132.5,22.5 H1143" stroke="#333" stroke-width="1"/><rect x="1178.8" y="20.2" width="7.6" height="7.6" rx="1.5" fill="none" stroke="#333" stroke-width="1"/><path d="M1181,18.6 H1187 Q1189,18.6 1189,20.6 V26" fill="none" stroke="#333" stroke-width="1"/><path d="M1224.8,18.2 L1234.8,28 M1234.8,18.2 L1224.8,28" stroke="#333" stroke-width="1.05"/><path d="M992.8,54.3 H1003.3 V62 H996.5 L993.6,64.8 V62 H992.8 Z" fill="none" stroke="#333" stroke-width="1" stroke-linejoin="round"/><circle cx="1089.5" cy="58.7" r="3.2" fill="none" stroke="#fff" stroke-width="1.1"/><path d="M1084.3,68.3 C1084.5,64 1086.5,62.8 1089.5,62.8 C1091.2,62.8 1092.5,63.3 1093.4,64.3" fill="none" stroke="#fff" stroke-width="1.1"/><path d="M1091.5,53 H1099.5 V60.5 H1096.5" fill="none" stroke="#fff" stroke-width="1.1"/><path d="M1094,63.5 L1096,65.5 L1099.5,61.5" fill="none" stroke="#fff" stroke-width="1.1"/><path d="M1163.75,59.125 L1166.5,61.875 L1169.25,59.125" fill="none" stroke="#fff" stroke-width="1.2" stroke-linecap="round" stroke-linejoin="round"/><path d="M1196.5,57 H1191.3 V67.5 H1201.5 V63" fill="none" stroke="#fff" stroke-width="1.1"/><path d="M1194.8,64 C1195.5,59.5 1198.5,57.8 1202.5,57.8 M1200,54.8 L1203.2,57.8 L1200,60.8" fill="none" stroke="#fff" stroke-width="1.1" stroke-linecap="round" stroke-linejoin="round"/><path d="M1242.75,59.125 L1245.5,61.875 L1248.25,59.125" fill="none" stroke="#fff" stroke-width="1.2" stroke-linecap="round" stroke-linejoin="round"/><path d="M107.5,162.5 V157.5 H112.5" fill="none" stroke="#666" stroke-width="1"/><path d="M109.5,159.5 L114.5,164.5 M114.5,160.8 V164.5 H110.8" fill="none" stroke="#666" stroke-width="1"/><path d="M118.6,80 V164" stroke="#e1e1e1" stroke-width="1"/><path d="M331.5,162.5 V157.5 H336.5" fill="none" stroke="#666" stroke-width="1"/><path d="M333.5,159.5 L338.5,164.5 M338.5,160.8 V164.5 H334.8" fill="none" stroke="#666" stroke-width="1"/><path d="M342,78 V164" stroke="#e1e1e1" stroke-width="1"/><path d="M515.5,162.5 V157.5 H520.5" fill="none" stroke="#666" stroke-width="1"/><path d="M517.5,159.5 L522.5,164.5 M522.5,160.8 V164.5 H518.8" fill="none" stroke="#666" stroke-width="1"/><path d="M526,78 V164" stroke="#e1e1e1" stroke-width="1"/><path d="M860.5,162.5 V157.5 H865.5" fill="none" stroke="#666" stroke-width="1"/><path d="M862.5,159.5 L867.5,164.5 M867.5,160.8 V164.5 H863.8" fill="none" stroke="#666" stroke-width="1"/><path d="M871.6,78 V165" stroke="#e1e1e1" stroke-width="1"/><path d="M923.6,78 V165" stroke="#e1e1e1" stroke-width="1"/><path d="M977.5,78 V165" stroke="#e1e1e1" stroke-width="1"/><path d="M1033,78 V165" stroke="#e1e1e1" stroke-width="1"/><path d="M1092.5,78 V165" stroke="#e1e1e1" stroke-width="1"/><path d="M1179.5,78 V165" stroke="#e1e1e1" stroke-width="1"/><path d="M1226.0,155.0 L1231,160.0 L1236.0,155.0" fill="none" stroke="#444" stroke-width="1.2" stroke-linecap="round" stroke-linejoin="round"/><path d="M57,87 H61 M70,87 H74 V95" fill="none" stroke="#e8a33d" stroke-width="1.3"/><rect x="56" y="87" width="18.5" height="23" rx="1.5" fill="#fff3dc" stroke="#e8a33d" stroke-width="1.3"/><path d="M61,89.5 V85.5 H63.5 A2,2 0 0 1 67.5,85.5 H70 V89.5 Z" fill="#f6f6f6" stroke="#777" stroke-width="1.1"/><rect x="67.5" y="94.5" width="14" height="16" fill="#f1f1f1" stroke="#666" stroke-width="1.2"/><path d="M63.3,136.25 L65.8,138.75 L68.3,136.25" fill="none" stroke="#444" stroke-width="1.1" stroke-linecap="round" stroke-linejoin="round"/><path d="M96,84 L101.5,93.5 M103,84 L97.5,93.5" stroke="#555" stroke-width="1.1"/><circle cx="96.6" cy="95.3" r="2.1" fill="none" stroke="#3b9ad9" stroke-width="1.2"/><circle cx="102.4" cy="95.3" r="2.1" fill="none" stroke="#3b9ad9" stroke-width="1.2"/><path d="M97,120.5 H92.5 V107.8 H99.5 L101,109.3" fill="none" stroke="#555" stroke-width="1.1"/><path d="M95.5,111.5 H103 L107,115.5 V122.5 H95.5 Z" fill="#fff" stroke="#555" stroke-width="1.1"/><path d="M98,117 H104 M98,119.5 H104" stroke="#777" stroke-width="0.9"/><path d="M92.5,141.5 L98,136 L103,141 L97.5,146.5 Z" fill="#f6c27a" stroke="#e0892a" stroke-width="1.1" stroke-linejoin="round"/><path d="M94.5,143.5 L99.5,138.5 M96,145 L101,140" stroke="#e0892a" stroke-width="0.8"/><path d="M99,137 L101.5,134.5 L104,137 L101.5,139.5 Z" fill="#fff" stroke="#555" stroke-width="1.1"/><path d="M102.5,135.5 L106.5,131.8" stroke="#555" stroke-width="2" stroke-linecap="round"/><path d="M283.7,88.3 L286.7,91.3 L289.7,88.3" fill="none" stroke="#444" stroke-width="1.1" stroke-linecap="round" stroke-linejoin="round"/><path d="M326.4,88.3 L329.4,91.3 L332.4,88.3" fill="none" stroke="#444" stroke-width="1.1" stroke-linecap="round" stroke-linejoin="round"/><path d="M182,120.8 H191" stroke="#444" stroke-width="1"/><path d="M202.25,113.625 L205,116.375 L207.75,113.625" fill="none" stroke="#444" stroke-width="1.1" stroke-linecap="round" stroke-linejoin="round"/><path d="M218.5,115.5 H234" stroke="#555" stroke-width="1"/><path d="M289.8,104 V126" stroke="#e1e1e1" stroke-width="1"/><path d="M296.5,121.5 L301.5,107.5 L306.5,121.5 M298.5,116 H304" fill="none" stroke="#555" stroke-width="1.1"/><path d="M304,120.5 L308.5,116 L311.5,119 L307,123.5 Z" fill="#e5b8ec" stroke="#a64bb8" stroke-width="1"/><path d="M130.8,146 L135.6,132.2 H139.2 L144,146 H140.2 L139.1,142.6 H135.7 L134.6,146 Z M136.5,139.6 H138.3 L137.4,136.5 Z" fill="#b9dcf7" stroke="#1f72c4" stroke-width="1.3" stroke-linejoin="round"/><path d="M151.05,137.825 L153.8,140.575 L156.55,137.825" fill="none" stroke="#444" stroke-width="1.1" stroke-linecap="round" stroke-linejoin="round"/><path d="M172.5,140 L180.5,132 L183,134.5 L175,142.5 L172,142.8 Z" fill="none" stroke="#555" stroke-width="1.1"/><path d="M193.75,137.825 L196.5,140.575 L199.25,137.825" fill="none" stroke="#444" stroke-width="1.1" stroke-linecap="round" stroke-linejoin="round"/><path d="M211.5,141.5 L217,131 L222.5,141.5 M213.5,137.5 H220.5" fill="none" stroke="#444" stroke-width="1.1"/><path d="M231.95,137.825 L234.7,140.575 L237.45,137.825" fill="none" stroke="#444" stroke-width="1.1" stroke-linecap="round" stroke-linejoin="round"/><path d="M269.25,137.825 L272,140.575 L274.75,137.825" fill="none" stroke="#444" stroke-width="1.1" stroke-linecap="round" stroke-linejoin="round"/><path d="M284.4,129 V150" stroke="#e1e1e1" stroke-width="1"/><path d="M302.5,135 L304.5,133 L306.5,135" fill="none" stroke="#3b8fd9" stroke-width="1"/><path d="M327.5,133 L329.5,135 L331.5,133" fill="none" stroke="#3b8fd9" stroke-width="1"/><rect x="354.2" y="81.8" width="2.2" height="2.2" fill="#3b8fd9"/><rect x="354.2" y="88" width="2.2" height="2.2" fill="#3b8fd9"/><rect x="354.2" y="94.2" width="2.2" height="2.2" fill="#3b8fd9"/><path d="M359,82.8 H368.8" stroke="#555" stroke-width="1.2"/><path d="M359,89 H368.8" stroke="#555" stroke-width="1.2"/><path d="M359,95.2 H368.8" stroke="#555" stroke-width="1.2"/><path d="M377.25,88.125 L380,90.875 L382.75,88.125" fill="none" stroke="#444" stroke-width="1.1" stroke-linecap="round" stroke-linejoin="round"/><path d="M397,82.8 H408" stroke="#555" stroke-width="1.2"/><path d="M397,89 H408" stroke="#555" stroke-width="1.2"/><path d="M397,95.2 H408" stroke="#555" stroke-width="1.2"/><path d="M416.25,88.125 L419,90.875 L421.75,88.125" fill="none" stroke="#444" stroke-width="1.1" stroke-linecap="round" stroke-linejoin="round"/><path d="M436,82.8 H446" stroke="#555" stroke-width="1.2"/><path d="M438.5,89 H446" stroke="#555" stroke-width="1.2"/><path d="M440,95.2 H446" stroke="#555" stroke-width="1.2"/><path d="M452.85,88.125 L455.6,90.875 L458.35,88.125" fill="none" stroke="#444" stroke-width="1.1" stroke-linecap="round" stroke-linejoin="round"/><path d="M469,80 V100" stroke="#e1e1e1" stroke-width="1"/><path d="M475.5,82.8 H489" stroke="#555" stroke-width="1.2"/><path d="M475.5,95.2 H489" stroke="#555" stroke-width="1.2"/><path d="M482,87 H489" stroke="#555" stroke-width="1.2"/><path d="M482,91 H489" stroke="#555" stroke-width="1.2"/><path d="M480.5,89 H475.5 M477.8,86.6 L475.5,89 L477.8,91.4" fill="none" stroke="#3b8fd9" stroke-width="1.1"/><path d="M500.5,82.8 H514" stroke="#555" stroke-width="1.2"/><path d="M500.5,95.2 H514" stroke="#555" stroke-width="1.2"/><path d="M507,87 H514" stroke="#555" stroke-width="1.2"/><path d="M507,91 H514" stroke="#555" stroke-width="1.2"/><path d="M500.5,89 H505.5 M503.2,86.6 L505.5,89 L503.2,91.4" fill="none" stroke="#3b8fd9" stroke-width="1.1"/><path d="M355,108.5 H369" stroke="#555" stroke-width="1.2"/><path d="M355,116.5 H369" stroke="#555" stroke-width="1.2"/><path d="M355,112.5 H365" stroke="#555" stroke-width="1.2"/><path d="M355,120.5 H365" stroke="#555" stroke-width="1.2"/><path d="M380,108.5 H394" stroke="#555" stroke-width="1.2"/><path d="M380,116.5 H394" stroke="#555" stroke-width="1.2"/><path d="M382.5,112.5 H391.5" stroke="#555" stroke-width="1.2"/><path d="M382.5,120.5 H391.5" stroke="#555" stroke-width="1.2"/><path d="M405,108.5 H418.5" stroke="#555" stroke-width="1.2"/><path d="M405,116.5 H418.5" stroke="#555" stroke-width="1.2"/><path d="M408.5,112.5 H418.5" stroke="#555" stroke-width="1.2"/><path d="M408.5,120.5 H418.5" stroke="#555" stroke-width="1.2"/><path d="M430,108.5 H443" stroke="#555" stroke-width="1.2"/><path d="M430,112.5 H443" stroke="#555" stroke-width="1.2"/><path d="M430,116.5 H443" stroke="#555" stroke-width="1.2"/><path d="M430,120.5 H443" stroke="#555" stroke-width="1.2"/><path d="M458.5,108 V121 M456.3,110.3 L458.5,108 L460.7,110.3 M456.3,118.7 L458.5,121 L460.7,118.7" fill="none" stroke="#3b8fd9" stroke-width="1.1"/><path d="M463.5,108.5 H472" stroke="#555" stroke-width="1.2"/><path d="M463.5,112.5 H472" stroke="#555" stroke-width="1.2"/><path d="M463.5,116.5 H472" stroke="#555" stroke-width="1.2"/><path d="M463.5,120.5 H472" stroke="#555" stroke-width="1.2"/><path d="M477.25,113.125 L480,115.875 L482.75,113.125" fill="none" stroke="#444" stroke-width="1.1" stroke-linecap="round" stroke-linejoin="round"/><path d="M357,138 L361.5,133.5 L366,138 L361.5,142.5 Z" fill="none" stroke="#555" stroke-width="1.1"/><path d="M364.5,134 Q368.5,135 367.5,139" fill="none" stroke="#3b8fd9" stroke-width="1.1"/><path d="M377.25,138.125 L380,140.875 L382.75,138.125" fill="none" stroke="#444" stroke-width="1.1" stroke-linecap="round" stroke-linejoin="round"/><rect x="393.3" y="132.3" width="14.2" height="14.2" fill="none" stroke="#777" stroke-width="0.8" stroke-dasharray="1,1"/><path d="M400.4,132.3 V146.5 M393.3,139.4 H407.5" stroke="#555" stroke-width="0.9"/><path d="M393.3,146.5 H407.5" stroke="#444" stroke-width="1.4"/><path d="M415.75,138.125 L418.5,140.875 L421.25,138.125" fill="none" stroke="#444" stroke-width="1.1" stroke-linecap="round" stroke-linejoin="round"/><path d="M428,129 V150" stroke="#e1e1e1" stroke-width="1"/><path d="M446.5,132.5 V147 M443.5,144 L446.5,147 L449.5,144" fill="none" stroke="#444" stroke-width="1.1"/><path d="M455.6,129 V150" stroke="#e1e1e1" stroke-width="1"/><path d="M851.7,97.05 L854.2,94.55 L856.7,97.05" fill="none" stroke="#c8c8c8" stroke-width="1" stroke-linecap="round" stroke-linejoin="round"/><path d="M851.7,113.75 L854.2,116.25 L856.7,113.75" fill="none" stroke="#444" stroke-width="1.1" stroke-linecap="round" stroke-linejoin="round"/><path d="M850.5,130.8 H858" stroke="#444" stroke-width="1"/><path d="M851.7,133.95 L854.2,136.45 L856.7,133.95" fill="none" stroke="#444" stroke-width="1.1" stroke-linecap="round" stroke-linejoin="round"/><circle cx="901" cy="90.5" r="9.6" fill="#fbfbfb" stroke="#555" stroke-width="1.2"/><path d="M894.2,97.3 L883,108.5" stroke="#555" stroke-width="1.2" stroke-linecap="round"/><path d="M893.95,132.625 L896.7,135.375 L899.45,132.625" fill="none" stroke="#444" stroke-width="1.1" stroke-linecap="round" stroke-linejoin="round"/><rect x="944.6" y="81.3" width="10.8" height="21" rx="5.4" fill="#62a8e5" stroke="#2a72c0" stroke-width="1.1"/><path d="M941.8,98.5 A8.2,8.2 0 0 0 958.2,98.5 M950,106.7 V111" fill="none" stroke="#555" stroke-width="1.2"/><path d="M947.25,136.125 L950,138.875 L952.75,136.125" fill="none" stroke="#444" stroke-width="1.1" stroke-linecap="round" stroke-linejoin="round"/><path d="M991.5,110 L993,103 L1007,82.5 L1012,86 L998,106 Z" fill="#fff" stroke="#1d5bb8" stroke-width="1.6" stroke-linejoin="round"/><path d="M1006,90.6 H1019.2 M1003,98.2 H1013.8 M999,105.3 H1008.6" stroke="#1d5bb8" stroke-width="3.4" stroke-linecap="round"/><rect x="1050.3" y="83.4" width="25.6" height="25.9" fill="#fbe9e0" stroke="#e07b53" stroke-width="1.2"/><rect x="1053.5" y="86.6" width="8.8" height="9.2" fill="#fff" stroke="#e07b53" stroke-width="1.2"/><rect x="1063.8" y="86.6" width="8.8" height="9.2" fill="#fff" stroke="#e07b53" stroke-width="1.2"/><rect x="1053.5" y="96.9" width="8.8" height="9.2" fill="#fff" stroke="#e07b53" stroke-width="1.2"/><rect x="1063.8" y="96.9" width="8.8" height="9.2" fill="#fff" stroke="#e07b53" stroke-width="1.2"/><circle cx="1136.7" cy="96.3" r="11.3" fill="#e9eef3"/><circle cx="1136.7" cy="96.3" r="8.5" fill="none" stroke="#c9d5e2" stroke-width="2" stroke-dasharray="1,1"/><circle cx="1136.7" cy="96.3" r="5" fill="none" stroke="#c9d5e2" stroke-width="1.5" stroke-dasharray="1,1"/><text x="1121.3" y="98.4" font-family="Liberation Sans" font-weight="bold" font-size="5" textLength="31" lengthAdjust="spacingAndGlyphs" fill="#333">DOCUMENT CRUNCH</text><path d="M1195,191.3 L1201.3,198.3 L1207.6,191.3" fill="none" stroke="#444" stroke-width="1.2"/><path d="M1227.3,190.3 L1237.3,199.3 M1237.3,190.3 L1227.3,199.3" stroke="#444" stroke-width="1.2"/><path d="M1236,232.3 L1232.5,235.6 L1236,238.9" fill="none" stroke="#555" stroke-width="1.1"/><path d="M963.4,236.8 H952.3 M957.5,231.6 L952.3,236.8 L957.5,242" fill="none" stroke="#a8a8a8" stroke-width="1.2"/><path d="M1195.8,358.3 L1200.2,352.4 L1204.6,358.3 Z" fill="#8a8a8a"/><path d="M1196,610 L1200.35,616.6 L1204.7,610 Z" fill="#8a8a8a"/><path d="M955.8,660.5 L951.3,665.2 L955.8,669.9" fill="none" stroke="#555" stroke-width="1.4"/><path d="M983.8,660.5 L988.3,665.2 L983.8,669.9" fill="none" stroke="#555" stroke-width="1.4"/><path d="M1146.2,663.5 A9,9 0 0 1 1163.5,661.5 M1163.8,667 A9,9 0 0 1 1146.5,669" fill="none" stroke="#666" stroke-width="1.4"/><path d="M1164.3,655.8 V661.8 H1158.5 M1145.6,674.5 V668.5 H1151.4" fill="none" stroke="#666" stroke-width="1.4"/><polygon points="1210.20,665.00 1210.10,666.57 1207.18,667.41 1206.79,668.56 1206.25,669.65 1207.72,672.31 1206.69,673.49 1205.51,674.52 1202.85,673.05 1201.76,673.59 1200.61,673.98 1199.77,676.90 1198.20,677.00 1196.63,676.90 1195.79,673.98 1194.64,673.59 1193.55,673.05 1190.89,674.52 1189.71,673.49 1188.68,672.31 1190.15,669.65 1189.61,668.56 1189.22,667.41 1186.30,666.57 1186.20,665.00 1186.30,663.43 1189.22,662.59 1189.61,661.44 1190.15,660.35 1188.68,657.69 1189.71,656.51 1190.89,655.48 1193.55,656.95 1194.64,656.41 1195.79,656.02 1196.63,653.10 1198.20,653.00 1199.77,653.10 1200.61,656.02 1201.76,656.41 1202.85,656.95 1205.51,655.48 1206.69,656.51 1207.72,657.69 1206.25,660.35 1206.79,661.44 1207.18,662.59 1210.10,663.43" fill="none" stroke="#666" stroke-width="1.3" stroke-linejoin="round"/><circle cx="1198.2" cy="665" r="4.2" fill="none" stroke="#666" stroke-width="1.3"/><path d="M1216.5,668.8 L1221.4,663.3 L1226.3,668.8" fill="none" stroke="#666" stroke-width="1.3"/><path d="M1069,414.5 C1069,412.5 1072,412.5 1072,414.5 V421 C1072,419.6 1074.8,419.6 1074.8,421 V422 C1074.8,420.6 1077.6,420.6 1077.6,422 V423 C1077.6,421.8 1080.2,421.8 1080.2,423 V429 C1080.2,433 1078.5,435.5 1075,435.5 H1072.5 C1070,435.5 1068.5,433.5 1066.5,430.5 L1063.8,426 C1063,424.6 1065,423.3 1066.2,424.5 L1069,427.5 Z" fill="#fff" stroke="#444" stroke-width="0.9"/><path d="M212.5,703.5 H224.5 V709 M212.5,703.5 V716 H218 M218.5,703.5 V711.5" fill="none" stroke="#555" stroke-width="1.1"/><path d="M220,711.5 L225.5,717 M225.5,711.5 L220,717" stroke="#555" stroke-width="1.1"/><circle cx="354.5" cy="703.8" r="1.6" fill="none" stroke="#444" stroke-width="1"/><path d="M349,706.5 H360 M354.5,706.5 V711 L351.5,716.5 M354.5,711 L356,713" fill="none" stroke="#444" stroke-width="1.1"/><path d="M357.5,712.5 L361.5,716.5 M361.5,712.5 L357.5,716.5" stroke="#444" stroke-width="1.1"/><path d="M821,714 H814.8 V704 H827.2 V708" fill="none" stroke="#555" stroke-width="1.1"/><circle cx="824" cy="713" r="3" fill="none" stroke="#555" stroke-width="1.6" stroke-dasharray="1.4,1"/><path d="M917,706 V703 H920 M927,703 H930 V706 M930,714 V717 H927 M920,717 H917 V714" fill="none" stroke="#555" stroke-width="1.1"/><path d="M920.5,705 H925 L927,707 V715 H920.5 Z" fill="none" stroke="#555" stroke-width="1.1"/><path d="M981.5,704 H987.7 V716.5 H981.5 Z M987.7,704 H994 V716.5 H987.7" fill="none" stroke="#555" stroke-width="1.1"/><path d="M983,707 H986 M983,709.5 H986 M983,712 H986 M989.5,707 H992.5 M989.5,709.5 H992.5 M989.5,712 H992.5" stroke="#555" stroke-width="0.8"/><rect x="1020" y="703.5" width="11.5" height="13" fill="none" stroke="#444" stroke-width="1.1"/><path d="M1022,706.5 H1029.5 M1022,709 H1029.5 M1022,711.5 H1029.5 M1022,714 H1029.5" stroke="#444" stroke-width="0.8"/><path d="M1066,716.5 H1058.3 V703.8 H1070.5 V709" fill="none" stroke="#555" stroke-width="1.1"/><path d="M1060,706.5 H1068.5 M1060,709 H1065 M1060,711.5 H1064" stroke="#555" stroke-width="0.8"/><circle cx="1068.5" cy="714" r="3.5" fill="#444"/><path d="M1068.5,712.3 V715.8" stroke="#fff" stroke-width="1"/><path d="M1088.7,709.6 H1095.8" stroke="#555" stroke-width="1"/><path d="M1101.4,709.6 H1195.7" stroke="#777" stroke-width="1.2"/><path d="M1201,709.6 H1208 M1204.5,706.1 V713.1" stroke="#555" stroke-width="1"/></svg>
</body></html>
